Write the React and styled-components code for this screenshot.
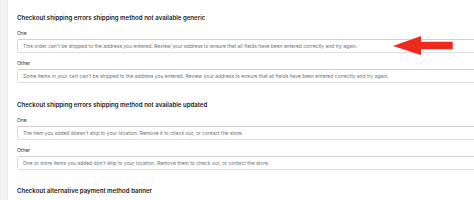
import React from "react";
import styled, { createGlobalStyle } from "styled-components";

const Global = createGlobalStyle`
  html, body { margin: 0; padding: 0; background: #ffffff; }
  body { font-family: Inter, "Helvetica Neue", Arial, sans-serif; overflow: hidden; }
`;

const Page = styled.div`
  display: flex;
  width: 474px;
  height: 200px;
  overflow: hidden;
`;

const Rail = styled.div`
  width: 7px;
  flex: none;
  background: #f3f3f4;
  border-right: 1px solid #ececee;
`;

const Content = styled.div`
  flex: 1;
  padding: 14px 0 0 9px;
  display: flex;
  flex-direction: column;
  gap: 17.5px;
  margin-right: -20px;
`;

const Section = styled.section`
  display: flex;
  flex-direction: column;
  gap: 6px;
`;

const Heading = styled.h2`
  margin: 0 0 1px;
  font-size: 6.1px;
  line-height: 8px;
  font-weight: 600;
  color: #202223;
  white-space: nowrap;
`;

const Field = styled.div`
  position: relative;
  display: flex;
  flex-direction: column;
  gap: 2px;
`;

const Label = styled.div`
  font-size: 5px;
  line-height: 8px;
  color: #303235;
`;

const Input = styled.div`
  height: 14px;
  box-sizing: border-box;
  border: 1px solid #dedede;
  border-top: 1.5px solid #d2d2d2;
  border-radius: 2px;
  padding: 0 5px;
  display: flex;
  align-items: center;
  font-size: 4.95px;
  color: #6d7175;
  white-space: nowrap;
  overflow: hidden;
`;

const Arrow = styled.svg`
  position: absolute;
  left: 376px;
  top: 7px;
  width: 70px;
  height: 20px;
`;

const sections = [
  {
    title: "Checkout shipping errors shipping method not available generic",
    fields: [
      {
        label: "One",
        value:
          "This order can't be shipped to the address you entered. Review your address to ensure that all fields have been entered correctly and try again.",
        arrow: true,
      },
      {
        label: "Other",
        value:
          "Some items in your cart can't be shipped to the address you entered. Review your address to ensure that all fields have been entered correctly and try again.",
      },
    ],
  },
  {
    title: "Checkout shipping errors shipping method not available updated",
    fields: [
      {
        label: "One",
        value:
          "The item you added doesn't ship to your location. Remove it to check out, or contact the store.",
      },
      {
        label: "Other",
        value:
          "One or more items you added don't ship to your location. Remove them to check out, or contact the store.",
      },
    ],
  },
  {
    title: "Checkout alternative payment method banner",
    fields: [],
  },
];

export default function App() {
  return (
    <>
      <Global />
      <Page>
        <Rail />
        <Content>
          {sections.map((s) => (
            <Section key={s.title}>
              <Heading>{s.title}</Heading>
              {s.fields.map((f) => (
                <Field key={f.label}>
                  <Label>{f.label}</Label>
                  <Input>{f.value}</Input>
                  {f.arrow && (
                    <Arrow viewBox="0 0 70 20">
                      <polygon
                        points="0,10 28,0 28,5.7 59.7,5.7 59.7,13.3 28,13.3 28,19"
                        fill="#ee2a1e"
                      />
                    </Arrow>
                  )}
                </Field>
              ))}
            </Section>
          ))}
        </Content>
      </Page>
    </>
  );
}
